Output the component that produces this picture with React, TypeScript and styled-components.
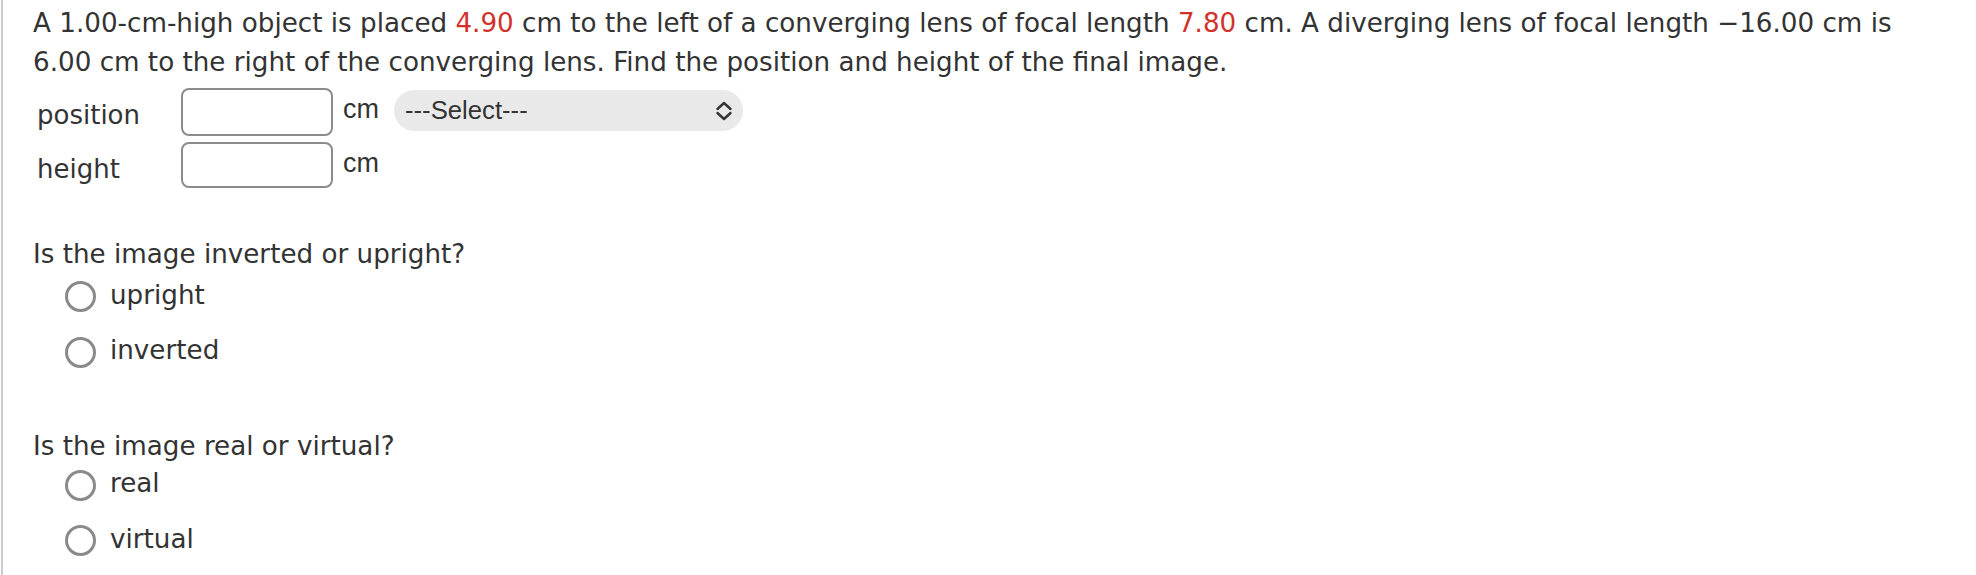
import React from 'react';
import styled, { createGlobalStyle } from 'styled-components';

const GlobalStyle = createGlobalStyle`
  html, body {
    margin: 0;
    padding: 0;
    background: #ffffff;
  }
  body {
    font-family: "DejaVu Sans", Verdana, sans-serif;
    color: #333333;
  }
`;

const Page = styled.div`
  min-height: 575px;
  box-sizing: border-box;
  margin-left: 1px;
  border-left: 2px solid #cccccc;
  padding: 4px 60px 0 30px;
`;

const Prompt = styled.p`
  margin: 0;
  font-size: 26.2px;
  line-height: 39px;
`;

const Given = styled.span`
  color: #d1322c;
`;

const AnswerGrid = styled.div`
  display: grid;
  grid-template-columns: 148px 162px 51px auto;
  grid-auto-rows: 48px;
  row-gap: 6px;
  align-items: start;
  margin-top: 6px;
  width: max-content;
`;

const FieldLabel = styled.label`
  font-size: 26px;
  line-height: 48px;
  padding: 3px 0 0 4px;
`;

const TextBox = styled.input<{ $h?: number }>`
  box-sizing: border-box;
  width: 152px;
  height: ${(p) => p.$h ?? 48}px;
  border: 2px solid #8c8c8c;
  border-radius: 8px;
  background: #fff;
  margin: 0;
`;

const Unit = styled.span`
  font-family: "Liberation Sans", Arial, sans-serif;
  font-size: 27px;
  line-height: 28px;
  padding-top: 7px;
`;

const SelectBox = styled.div`
  box-sizing: border-box;
  width: 349px;
  height: 41px;
  margin-top: 2px;
  border-radius: 21px;
  background: #e9e9e9;
  display: flex;
  align-items: center;
  justify-content: space-between;
  padding: 0 10px 0 11px;
  font-family: "Liberation Sans", Arial, sans-serif;
  font-size: 25.7px;
  color: #333;
`;

const Question = styled.div<{ $top: number }>`
  margin-top: ${(p) => p.$top}px;
`;

const QuestionText = styled.div`
  font-size: 26.2px;
  line-height: 39px;
`;

const OptionList = styled.div<{ $top: number }>`
  display: flex;
  flex-direction: column;
  gap: 24.5px;
  padding-left: 32px;
  margin-top: ${(p) => p.$top}px;
`;

const OptionRow = styled.label`
  display: flex;
  align-items: center;
  gap: 14px;
  font-size: 26.2px;
  height: 31px;
`;

const RadioDot = styled.input`
  appearance: none;
  -webkit-appearance: none;
  box-sizing: border-box;
  width: 31px;
  height: 31px;
  margin: 0;
  border: 3px solid #8a8a8a;
  border-radius: 50%;
  background: #fff;
  flex: none;
`;

const OptionText = styled.span`
  position: relative;
  top: -2px;
`;

const UpDown = () => (
  <svg width="18" height="20" viewBox="0 0 18 20" fill="none" stroke="#333" strokeWidth="2.4" strokeLinecap="round" strokeLinejoin="round">
    <path d="M2.5 8 L9 2 L15.5 8" />
    <path d="M2.5 12 L9 18 L15.5 12" />
  </svg>
);

const Choice = ({ name, label }: { name: string; label: string }) => (
  <OptionRow>
    <RadioDot type="radio" name={name} />
    <OptionText>{label}</OptionText>
  </OptionRow>
);

export default function App() {
  return (
    <>
      <GlobalStyle />
      <Page>
        <Prompt>
          A 1.00-cm-high object is placed <Given>4.90</Given> cm to the left of a converging lens of focal length{' '}
          <Given>7.80</Given> cm. A diverging lens of focal length −16.00 cm is 6.00 cm to the right of the converging
          lens. Find the position and height of the final image.
        </Prompt>

        <AnswerGrid>
          <FieldLabel>position</FieldLabel>
          <TextBox type="text" />
          <Unit>cm</Unit>
          <SelectBox>
            <span>---Select---</span>
            <UpDown />
          </SelectBox>

          <FieldLabel>height</FieldLabel>
          <TextBox type="text" $h={46} />
          <Unit>cm</Unit>
        </AnswerGrid>

        <Question $top={45}>
          <QuestionText>Is the image inverted or upright?</QuestionText>
          <OptionList $top={7}>
            <Choice name="orient" label="upright" />
            <Choice name="orient" label="inverted" />
          </OptionList>
        </Question>

        <Question $top={59}>
          <QuestionText>Is the image real or virtual?</QuestionText>
          <OptionList $top={4}>
            <Choice name="kind" label="real" />
            <Choice name="kind" label="virtual" />
          </OptionList>
        </Question>
      </Page>
    </>
  );
}
